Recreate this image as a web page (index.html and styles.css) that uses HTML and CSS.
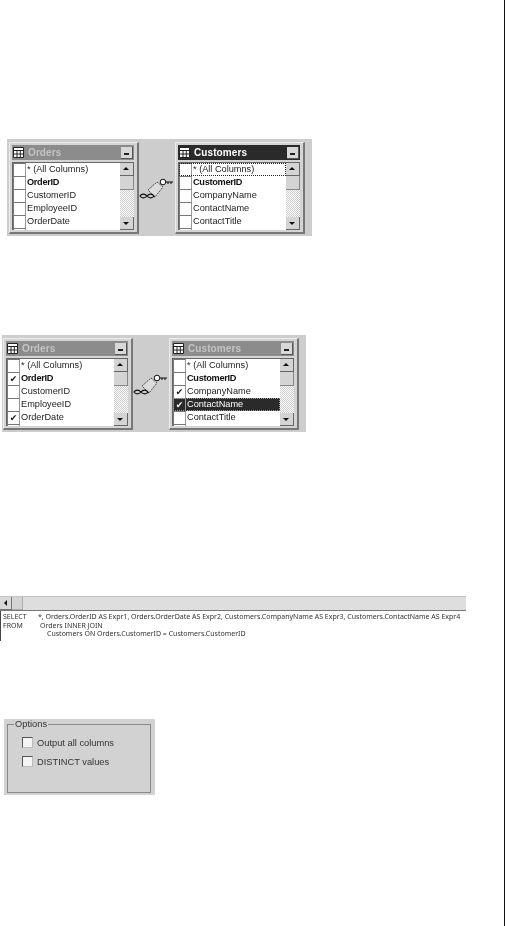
FILE: index.html
```html
<!DOCTYPE html>
<html lang="en">
<head>
    <meta charset="UTF-8">
    <meta name="viewport" content="width=device-width, initial-scale=1.0">
    <title>Query Designer</title>
    <link rel="stylesheet" href="styles.css">
</head>
<body>
    <div class="page">
        <div class="diagram diagram-first">
            <div class="table-win">
                <div class="title">
                    <svg class="grid-icon" viewBox="0 0 11 11"><path d="M.5.5h10v10H.5zM.5 3.5h10M.5 7h10M4 3.5v7M7.3 3.5v7" fill="#fff" stroke="#222"/></svg>
                    <span class="title-text">Orders</span>
                    <span class="min-btn"></span>
                </div>
                <div class="body">
                    <div class="rows">
                        <div class="row"><span class="check"></span><span class="name">* (All Columns)</span></div>
                        <div class="row"><span class="check"></span><span class="name key">OrderID</span></div>
                        <div class="row"><span class="check"></span><span class="name">CustomerID</span></div>
                        <div class="row"><span class="check"></span><span class="name">EmployeeID</span></div>
                        <div class="row"><span class="check"></span><span class="name">OrderDate</span></div>
                        <div class="row"><span class="check"></span><span class="name"></span></div>
                    </div>
                    <div class="scroll">
                        <span class="arrow arrow-up"></span>
                        <span class="thumb"></span>
                        <span class="track"></span>
                        <span class="arrow arrow-down"></span>
                    </div>
                </div>
            </div>
            <svg class="link" viewBox="0 0 36 30">
                <path d="M9 14l9-8 6 5-8 10z" fill="#dcdcdc" stroke="#222" stroke-width=".8" stroke-dasharray="2 1"/>
                <path d="M14 20l2 1M21 4l1 1" fill="none" stroke="#222"/>
                <path d="M1 20c1.500-2.500 5-2.500 7 0s5.500 2.500 7 0c-1.500-2.500-5-2.500-7 0s-5.500 2.500-7 0z" fill="none" stroke="#111" stroke-width="1.200"/>
                <circle cx="24" cy="6" r="2.800" fill="#fff" stroke="#111"/>
                <path d="M27 6h7M29 6v2M32 6v2" fill="none" stroke="#111"/>
            </svg>
            <div class="table-win active">
                <div class="title">
                    <svg class="grid-icon" viewBox="0 0 11 11"><path d="M.5.5h10v10H.5zM.5 3.5h10M.5 7h10M4 3.5v7M7.3 3.5v7" fill="#fff" stroke="#222"/></svg>
                    <span class="title-text">Customers</span>
                    <span class="min-btn"></span>
                </div>
                <div class="body">
                    <div class="rows">
                        <div class="row focused"><span class="check"></span><span class="name">* (All Columns)</span></div>
                        <div class="row"><span class="check"></span><span class="name key">CustomerID</span></div>
                        <div class="row"><span class="check"></span><span class="name">CompanyName</span></div>
                        <div class="row"><span class="check"></span><span class="name">ContactName</span></div>
                        <div class="row"><span class="check"></span><span class="name">ContactTitle</span></div>
                        <div class="row"><span class="check"></span><span class="name"></span></div>
                    </div>
                    <div class="scroll">
                        <span class="arrow arrow-up"></span>
                        <span class="thumb"></span>
                        <span class="track"></span>
                        <span class="arrow arrow-down"></span>
                    </div>
                </div>
            </div>
        </div>

        <div class="diagram diagram-second">
            <div class="table-win">
                <div class="title">
                    <svg class="grid-icon" viewBox="0 0 11 11"><path d="M.5.5h10v10H.5zM.5 3.5h10M.5 7h10M4 3.5v7M7.3 3.5v7" fill="#fff" stroke="#222"/></svg>
                    <span class="title-text">Orders</span>
                    <span class="min-btn"></span>
                </div>
                <div class="body">
                    <div class="rows">
                        <div class="row"><span class="check"></span><span class="name">* (All Columns)</span></div>
                        <div class="row"><span class="check on">✔</span><span class="name key">OrderID</span></div>
                        <div class="row"><span class="check"></span><span class="name">CustomerID</span></div>
                        <div class="row"><span class="check"></span><span class="name">EmployeeID</span></div>
                        <div class="row"><span class="check on">✔</span><span class="name">OrderDate</span></div>
                        <div class="row"><span class="check"></span><span class="name"></span></div>
                    </div>
                    <div class="scroll">
                        <span class="arrow arrow-up"></span>
                        <span class="thumb"></span>
                        <span class="track"></span>
                        <span class="arrow arrow-down"></span>
                    </div>
                </div>
            </div>
            <svg class="link" viewBox="0 0 36 30">
                <path d="M9 14l9-8 6 5-8 10z" fill="#dcdcdc" stroke="#222" stroke-width=".8" stroke-dasharray="2 1"/>
                <path d="M14 20l2 1M21 4l1 1" fill="none" stroke="#222"/>
                <path d="M1 20c1.500-2.500 5-2.500 7 0s5.500 2.500 7 0c-1.500-2.500-5-2.500-7 0s-5.500 2.500-7 0z" fill="none" stroke="#111" stroke-width="1.200"/>
                <circle cx="24" cy="6" r="2.800" fill="#fff" stroke="#111"/>
                <path d="M27 6h7M29 6v2M32 6v2" fill="none" stroke="#111"/>
            </svg>
            <div class="table-win">
                <div class="title">
                    <svg class="grid-icon" viewBox="0 0 11 11"><path d="M.5.5h10v10H.5zM.5 3.5h10M.5 7h10M4 3.5v7M7.3 3.5v7" fill="#fff" stroke="#222"/></svg>
                    <span class="title-text">Customers</span>
                    <span class="min-btn"></span>
                </div>
                <div class="body">
                    <div class="rows">
                        <div class="row"><span class="check"></span><span class="name">* (All Columns)</span></div>
                        <div class="row"><span class="check"></span><span class="name key">CustomerID</span></div>
                        <div class="row"><span class="check on">✔</span><span class="name">CompanyName</span></div>
                        <div class="row selected"><span class="check on">✔</span><span class="name">ContactName</span></div>
                        <div class="row"><span class="check"></span><span class="name">ContactTitle</span></div>
                        <div class="row"><span class="check"></span><span class="name"></span></div>
                    </div>
                    <div class="scroll">
                        <span class="arrow arrow-up"></span>
                        <span class="thumb"></span>
                        <span class="track"></span>
                        <span class="arrow arrow-down"></span>
                    </div>
                </div>
            </div>
        </div>

        <div class="sql-pane">
            <div class="hbar">
                <span class="hbar-btn"><span class="arrow-left"></span></span>
                <span class="hbar-thumb"></span>
            </div>
            <div class="sql">
                <div class="sql-line"><span class="kw">SELECT</span><span>*, Orders.OrderID AS Expr1, Orders.OrderDate AS Expr2, Customers.CompanyName AS Expr3, Customers.ContactName AS Expr4</span></div>
                <div class="sql-line"><span class="kw">FROM</span><span class="indent-1">Orders INNER JOIN</span></div>
                <div class="sql-line"><span class="kw"></span><span class="indent-2">Customers ON Orders.CustomerID = Customers.CustomerID</span></div>
            </div>
        </div>

        <div class="options-panel">
            <fieldset class="options">
                <legend>Options</legend>
                <label class="option"><span class="box"></span>Output all columns</label>
                <label class="option"><span class="box"></span>DISTINCT values</label>
            </fieldset>
        </div>
    </div>
</body>
</html>
```
FILE: styles.css
```css
body {
    margin: 0;
    background: white;
    font-family: "Liberation Sans", sans-serif;
    color: #222;
}
.page {
    width: 504px;
    height: 926px;
    border-right: 1px solid #111;
    overflow: hidden;
}
.diagram {
    display: flex;
    align-items: flex-start;
    background: #cdcdcd;
    height: 92px;
    padding-top: 3px;
    padding-bottom: 2px;
    filter: blur(.4px);
}
.diagram-first {
    margin: 139px 0 0 7px;
    width: 303px;
    padding-left: 2px;
}
.diagram-second {
    margin: 99px 0 0 2px;
    width: 303px;
    padding-left: 1px;
}
.table-win {
    width: 130px;
    height: 92px;
    box-sizing: border-box;
    background: #d4d4d4;
    border: 1px solid #ececec;
    border-right: 2px solid #777;
    border-bottom: 2px solid #777;
    padding: 2px 3px 2px 2px;
}
.title {
    display: flex;
    align-items: center;
    gap: 4px;
    height: 15px;
    padding: 0 1px 0 1px;
    background: #8c8c8c;
    color: #c4c4c4;
    font-size: 10px;
    font-weight: bold;
}
.active .title {
    background: #2a2a2a;
    color: white;
}
.grid-icon {
    width: 11px;
    height: 11px;
    flex: none;
}
.title-text {
    flex: 1;
    letter-spacing: 0.1px;
}
.min-btn {
    width: 12px;
    height: 12px;
    flex: none;
    background: #d8d8d8;
    border-right: 1px solid #555;
    border-bottom: 1px solid #555;
    box-sizing: border-box;
    position: relative;
}
.min-btn::after {
    content: "";
    position: absolute;
    left: 3px;
    top: 6px;
    width: 5px;
    height: 2px;
    background: #222;
}
.body {
    display: flex;
    height: 67px;
    background: white;
    margin-top: 2px;
    border-top: 1px solid #666;
    border-left: 1px solid #666;
}
.rows {
    flex: 1;
    overflow: hidden;
}
.row {
    display: flex;
    align-items: stretch;
    height: 13px;
    box-sizing: border-box;
    font-size: 9.200px;
    line-height: 13px;
    white-space: nowrap;
}
.check {
    width: 13px;
    height: 13px;
    flex: none;
    box-sizing: border-box;
    border-left: 1px solid #777;
    border-top: 1px solid #777;
    border-right: 1px solid #999;
    font-family: "DejaVu Sans", sans-serif;
    font-size: 9px;
    line-height: 12px;
    text-align: center;
    color: #111;
}
.name {
    padding-left: 1px;
    flex: 1;
}
.key {
    font-weight: bold;
    letter-spacing: -0.3px;
    color: #111;
}
.focused {
    outline: 1px dotted #222;
    outline-offset: -1px;
}
.selected {
    background: #2a2a2a;
    color: white;
    outline: 1px dotted #999;
    outline-offset: -1px;
}
.selected .check {
    color: white;
    background: #2a2a2a;
}
.scroll {
    display: flex;
    flex-direction: column;
    width: 14px;
    flex: none;
    background: #e2e2e2;
}
.arrow {
    display: block;
    height: 13px;
    background: #d4d4d4;
    border-right: 1px solid #666;
    border-bottom: 1px solid #666;
    box-sizing: border-box;
    position: relative;
}
.arrow::after {
    content: "";
    position: absolute;
    left: 3px;
    border-left: 3px solid transparent;
    border-right: 3px solid transparent;
}
.arrow-up::after {
    top: 4px;
    border-bottom: 3px solid #111;
}
.arrow-down::after {
    top: 5px;
    border-top: 3px solid #111;
}
.thumb {
    display: block;
    height: 14px;
    background: #d4d4d4;
    border-right: 1px solid #888;
    border-bottom: 1px solid #888;
    box-sizing: border-box;
}
.track {
    flex: 1;
    background: repeating-conic-gradient(#fff 0 25%, #ccc 0 50%) 0 0 / 2px 2px;
}
.sql-pane {
    margin-top: 164px;
    width: 466px;
    filter: blur(.3px);
}
.hbar {
    display: flex;
    height: 13px;
    background: #dedede;
    border-top: 1px solid #c4c4c4;
    border-bottom: 1px solid #777;
}
.hbar-btn {
    width: 12px;
    background: #d8d8d8;
    border-right: 1px solid #777;
    border-bottom: 1px solid #777;
    box-sizing: border-box;
    display: flex;
    align-items: center;
    justify-content: center;
}
.arrow-left {
    border-top: 3px solid transparent;
    border-bottom: 3px solid transparent;
    border-right: 3px solid #111;
}
.hbar-thumb {
    width: 11px;
    background: #d4d4d4;
    border-right: 1px solid #aaa;
    border-bottom: 1px solid #aaa;
    box-sizing: border-box;
}
.sql {
    border-left: 1px solid #444;
    padding: 2px 0 0 2px;
    font-family: "Noto Sans", sans-serif;
    font-size: 7px;
    line-height: 8.500px;
    color: #333;
    height: 28px;
}
.sql-line {
    display: flex;
    white-space: nowrap;
}
.kw {
    width: 35px;
    flex: none;
}
.indent-1 {
    padding-left: 2px;
}
.indent-2 {
    padding-left: 9px;
}
.options-panel {
    margin: 78px 0 0 4px;
    width: 151px;
    height: 76px;
    padding-left: 3px;
    box-sizing: border-box;
    background: #d2d2d2;
    filter: blur(.3px);
}
.options {
    width: 144px;
    height: 74px;
    box-sizing: border-box;
    margin: 0;
    padding: 4px 0 0 14px;
    border: 1px solid #8a8a8a;
    font-size: 9.300px;
    color: #333;
}
.options legend {
    padding: 0 1px;
    margin-left: -8px;
    line-height: 10px;
}
.option {
    display: flex;
    align-items: center;
    gap: 4px;
    height: 19px;
}
.box {
    width: 11px;
    height: 11px;
    box-sizing: border-box;
    background: #f4f4f4;
    border: 1px solid #555;
    border-right-color: #bbb;
    border-bottom-color: #bbb;
}
.link {
    width: 36px;
    height: 30px;
    flex: none;
    margin-top: 34px;
}
```
